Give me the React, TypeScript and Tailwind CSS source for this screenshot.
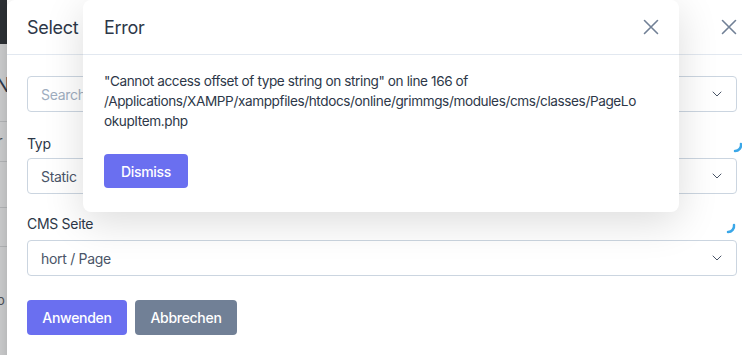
import React from 'react'

const CloseIcon = () => (
  <svg width="16" height="16" viewBox="0 0 16 16" fill="none" stroke="#718096" strokeWidth="1.6" strokeLinecap="round">
    <path d="M1.5 1.5 L14.5 14.5 M14.5 1.5 L1.5 14.5" />
  </svg>
)

const Chevron = () => (
  <svg width="10" height="6" viewBox="0 0 10 6" fill="none" stroke="#4a5568" strokeWidth="1" strokeLinecap="round" strokeLinejoin="round">
    <path d="M1 1 L5 5 L9 1" />
  </svg>
)

const Spinner = () => (
  <svg width="14" height="14" viewBox="0 0 14 14" fill="none">
    <path d="M12 5 A6 6 0 0 1 6 12" stroke="#3aa7e8" strokeWidth="2.5" strokeLinecap="round" />
  </svg>
)

function SelectBox({ value, placeholder }: { value?: string; placeholder?: string }) {
  return (
    <div className="flex h-[36px] items-center justify-between rounded-[4px] border border-[#cbd5e0] bg-white pl-[13px] pr-[14px] text-[14px]">
      {value ? (
        <span className="text-[#4a5568]">{value}</span>
      ) : (
        <span className="text-[#a0aec0]">{placeholder}</span>
      )}
      <Chevron />
    </div>
  )
}

export default function App() {
  return (
    <div
      className="relative h-[355px] w-[742px] overflow-hidden bg-white tracking-[-0.3px]"
      style={{ fontFamily: 'Inter, "Noto Sans", sans-serif' }}
    >
      {/* page behind the dialogs */}
      <div className="flex h-full w-[7px] flex-col overflow-hidden">
        <div className="h-[44px] shrink-0 bg-[#2b2f33]" />
        <div className="flex flex-1 flex-col bg-[#c6c7c8] text-[#2d3748]">
          <div className="flex h-[78px] items-center border-b border-[#aeb0b2] pt-[4px]">
            <span className="-ml-[5px] text-[20px] leading-none">N</span>
          </div>
          <div className="flex h-[40px] items-center border-b border-[#aeb0b2]">
            <span className="-ml-[3px] text-[15px] leading-none text-[#4a4f55]">r</span>
          </div>
          <div className="h-[46px] border-b border-[#aeb0b2]" />
          <div className="h-[39px] border-b border-[#aeb0b2]" />
          <div className="flex h-[106px] items-center">
            <span className="-ml-[3px] text-[13px] leading-none text-[#4a4f55]">o</span>
          </div>
        </div>
      </div>

      {/* Select dialog */}
      <div className="absolute left-[7px] top-0 h-[370px] w-[750px] rounded-lg bg-white shadow-[-2px_0_6px_rgba(0,0,0,0.08)]">
        <div className="flex h-[55px] items-center justify-between border-b border-[#e2e8f0] pl-[20px] pr-[20px]">
          <h2 className="text-[18px] text-[#2d3748]">Select</h2>
          <CloseIcon />
        </div>
        <div className="px-[20px] pt-[21px]">
          <SelectBox placeholder="Search" />
          <label className="mt-[22px] mb-[4px] block text-[14px] leading-[20px] text-[#2d3748]">Typ</label>
          <SelectBox value="Static" />
          <label className="mt-[20px] mb-[6px] block text-[14px] leading-[20px] text-[#2d3748]">CMS Seite</label>
          <SelectBox value="hort / Page" />
          <div className="mt-[24px] flex gap-[8px]">
            <button className="h-[35px] w-[100px] rounded-[4px] bg-[#6a6ff0] text-[14px] font-medium text-white">Anwenden</button>
            <button className="h-[35px] w-[102px] rounded-[4px] bg-[#718096] text-[14px] font-medium text-white">Abbrechen</button>
          </div>
        </div>
      </div>

      {/* loading spinners */}
      <div className="absolute left-[729px] top-[139px]">
        <Spinner />
      </div>
      <div className="absolute left-[722px] top-[220px]">
        <Spinner />
      </div>

      {/* Error dialog */}
      <div className="absolute left-[83px] top-0 w-[596px] rounded-lg bg-white shadow-[0_10px_40px_rgba(0,0,0,0.14)]">
        <div className="flex h-[55px] items-center justify-between border-b border-[#e2e8f0] pl-[21px] pr-[20px]">
          <h2 className="text-[18px] text-[#2d3748]">Error</h2>
          <CloseIcon />
        </div>
        <div className="px-[21px] pt-[16px] pb-[24px]">
          <p className="whitespace-nowrap text-[13.6px] leading-[20px] tracking-[-0.4px] text-[#2d3748]">
            "Cannot access offset of type string on string" on line 166 of
            <br />
            /Applications/XAMPP/xamppfiles/htdocs/online/grimmgs/modules/cms/classes/PageLo
            <br />
            okupItem.php
          </p>
          <button className="mt-[23px] h-[34px] w-[84px] rounded-[4px] bg-[#6a6ff0] text-[14px] font-medium text-white">Dismiss</button>
        </div>
      </div>
    </div>
  )
}
